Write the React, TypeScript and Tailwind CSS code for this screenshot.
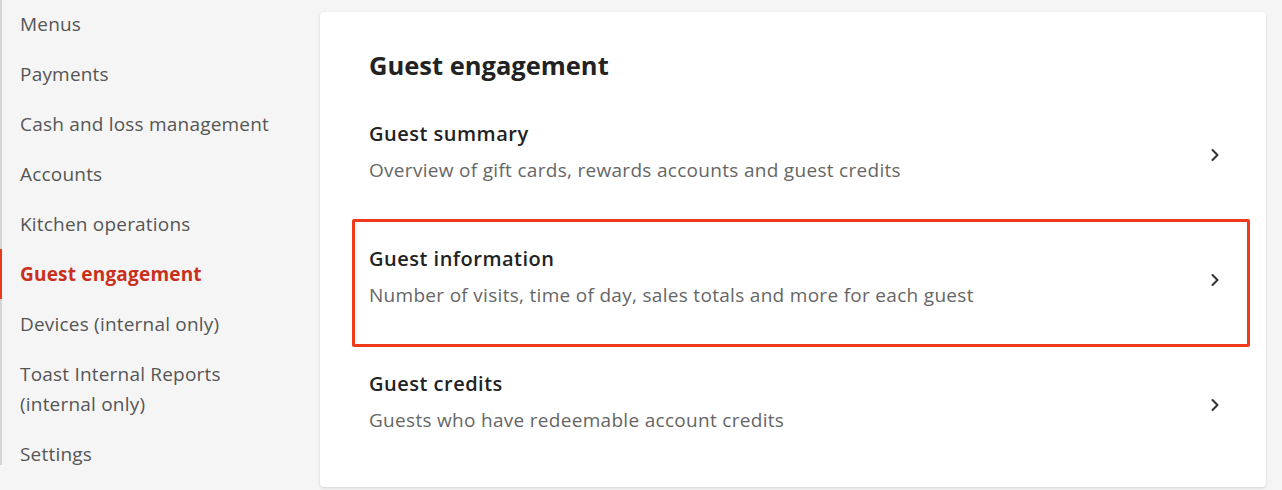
import { ChevronRight } from "lucide-react";

const navItems = [
  "Menus",
  "Payments",
  "Cash and loss management",
  "Accounts",
  "Kitchen operations",
  "Guest engagement",
  "Devices (internal only)",
  "Toast Internal Reports\n(internal only)",
  "Settings",
];

const reports = [
  {
    title: "Guest summary",
    desc: "Overview of gift cards, rewards accounts and guest credits",
  },
  {
    title: "Guest information",
    desc: "Number of visits, time of day, sales totals and more for each guest",
    highlighted: true,
  },
  {
    title: "Guest credits",
    desc: "Guests who have redeemable account credits",
  },
];

export default function App() {
  return (
    <div className="flex h-[490px] w-[1282px] overflow-hidden bg-[#f5f5f5] font-['Open_Sans',sans-serif]">
      {/* Sidebar */}
      <aside className="w-[320px] shrink-0 -mt-[1px]">
        <div className="h-[466px] border-l-2 border-[#d6d6d6]">
          {navItems.map((item) => {
            const active = item === "Guest engagement";
            return (
              <div
                key={item}
                className={`-ml-[2px] whitespace-pre-line border-l-2 py-[10px] pl-[18px] text-[19px] leading-[30px] tracking-[0.2px] ${
                  active
                    ? "border-[#e8391b] font-bold text-[#c8301c]"
                    : "border-transparent text-[#555]"
                }`}
              >
                {item}
              </div>
            );
          })}
        </div>
      </aside>

      {/* Main card */}
      <main className="mt-3 h-[475px] w-[946px] rounded-sm bg-white shadow-[0_1px_3px_rgba(0,0,0,0.15)]">
        <div className="px-[49px] pt-[36px]">
          <h1 className="text-[25.5px] font-bold leading-[34px] text-[#222]">
            Guest engagement
          </h1>
          <div className="mt-[38px]">
            {reports.map((r) => (
              <div key={r.title} className="relative h-[125px]">
                <div className="flex items-center">
                  <div className="flex-1">
                    <div className="text-[20px] font-semibold leading-[28px] tracking-[0.5px] text-[#222]">
                      {r.title}
                    </div>
                    <div className="mt-[10px] text-[19px] leading-[24px] tracking-[0.3px] text-[#666]">
                      {r.desc}
                    </div>
                  </div>
                  <ChevronRight
                    className="mr-[-8px] mt-[8px] text-[#333]"
                    size={20}
                    strokeWidth={2.5}
                  />
                </div>
                {r.highlighted && (
                  <div className="pointer-events-none absolute left-[-17px] top-[-26px] h-[128px] w-[898px] rounded-[2px] border-[3px] border-[#f0391a]" />
                )}
              </div>
            ))}
          </div>
        </div>
      </main>
    </div>
  );
}
